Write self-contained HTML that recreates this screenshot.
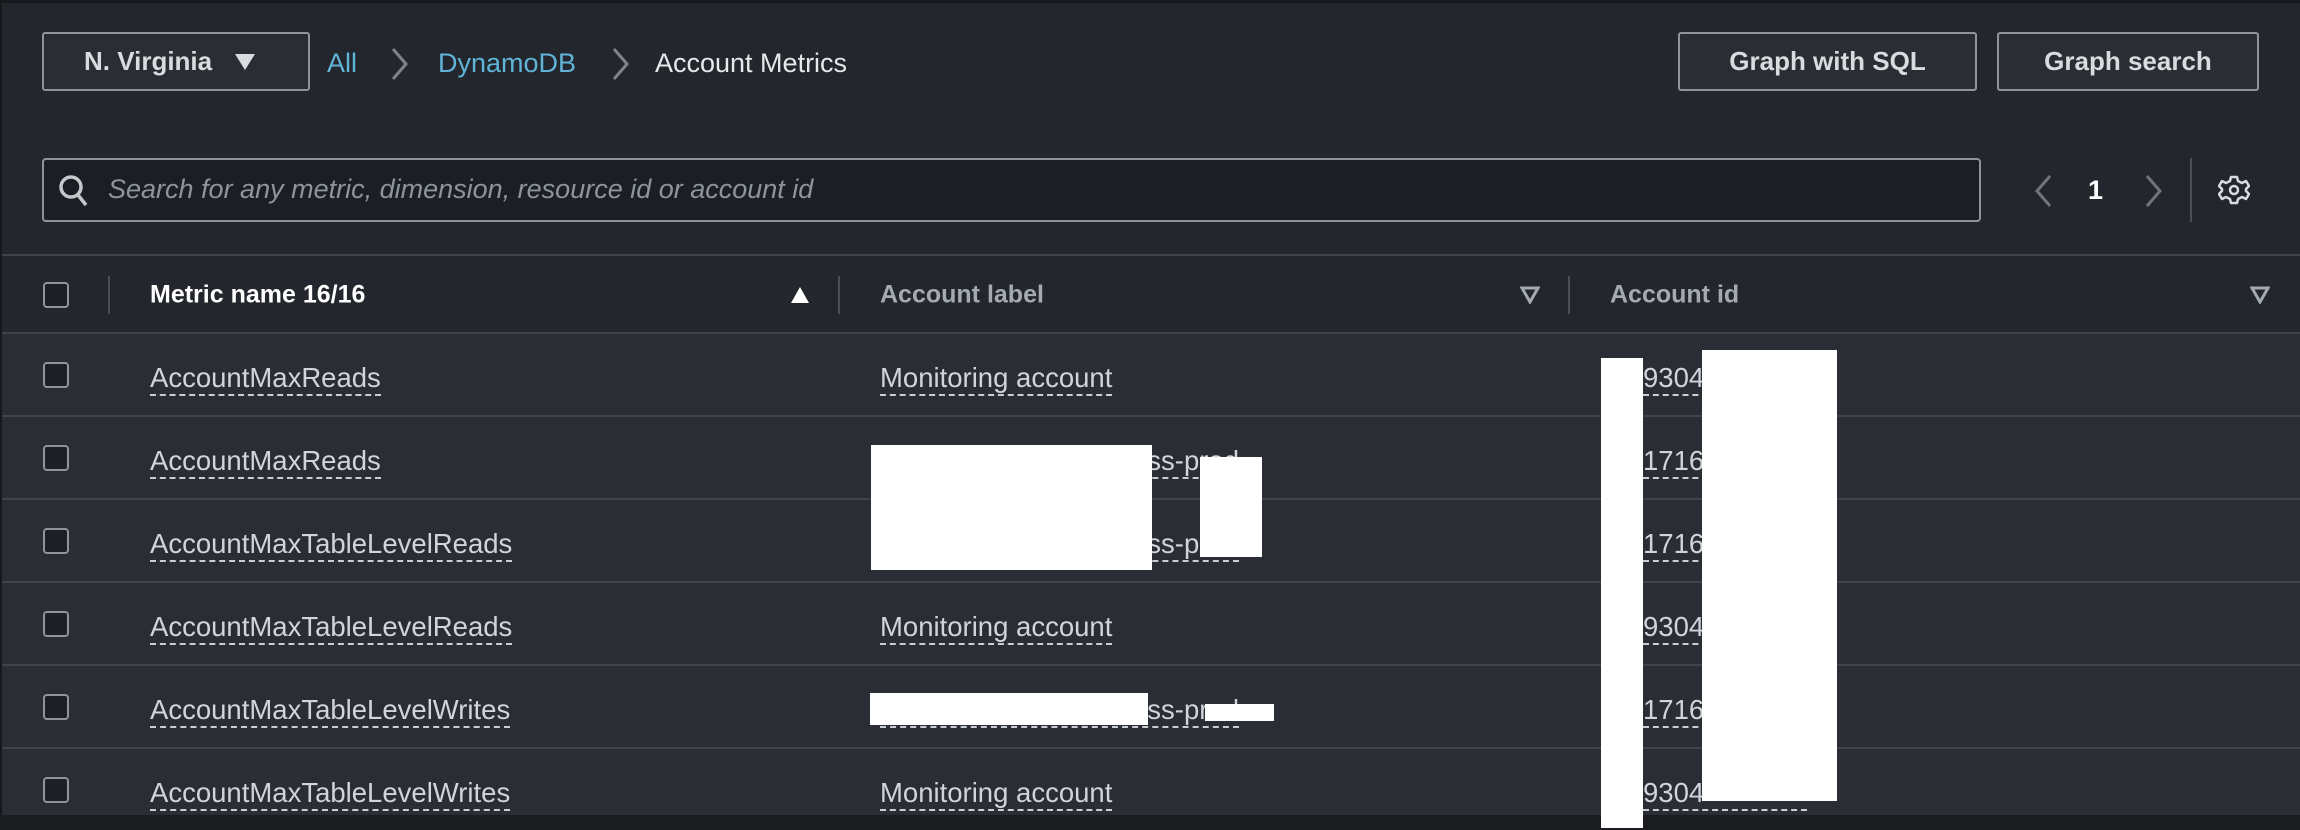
<!DOCTYPE html>
<html><head><meta charset="utf-8"><style>
*{margin:0;padding:0;box-sizing:border-box}
body{width:2300px;height:830px;background:#23262d;font-family:"Liberation Sans",sans-serif;position:relative;overflow:hidden;color:#d1d5db}
.a{position:absolute}
.btn{position:absolute;top:32px;height:59px;border:2px solid #8d9599;border-radius:3px;background:#2a2d33;color:#d8dcde;font-weight:bold;font-size:26px;display:flex;align-items:center;justify-content:center}
.hdr{position:absolute;top:295px;transform:translateY(-50%);font-size:25px;font-weight:bold}
.cb{position:absolute;left:43px;width:26px;height:26px;border:2px solid #8d9599;border-radius:4px;background:#1c1f25}
.row{position:absolute;left:2px;right:0;height:83px;background:#2a2d33;border-top:2px solid #3f444c}
.t{position:absolute;font-size:27.5px;color:#d1d5db;line-height:31px;border-bottom:2px dashed #c9ced1;padding-bottom:1px;white-space:nowrap}
.w{position:absolute;background:#fff}
.sep{position:absolute;width:2px;background:#4a5058}
</style></head><body>
<div class="a" style="left:0;top:0;width:2300px;height:3px;background:#16181c"></div>
<div class="a" style="left:0;top:0;width:2px;height:830px;background:#16181c"></div>

<div class="btn" style="left:42px;width:268px;justify-content:flex-start;padding-left:40px">N. Virginia<svg style="margin-left:22px" width="22" height="18" viewBox="0 0 22 18"><path d="M1 1H21L11 17Z" fill="#d8dcde"/></svg></div>
<div class="a" style="left:327px;top:48px;font-size:27px;color:#5fb4d8">All</div>
<svg class="a" style="left:390px;top:47px" width="20" height="34" viewBox="0 0 20 34"><path d="M3 2L16 17L3 32" stroke="#7d848a" stroke-width="3" fill="none"/></svg>
<div class="a" style="left:438px;top:48px;font-size:27px;color:#5fb4d8">DynamoDB</div>
<svg class="a" style="left:611px;top:47px" width="20" height="34" viewBox="0 0 20 34"><path d="M3 2L16 17L3 32" stroke="#7d848a" stroke-width="3" fill="none"/></svg>
<div class="a" style="left:655px;top:48px;font-size:27px;color:#e6e8ea">Account Metrics</div>

<div class="btn" style="left:1678px;width:299px">Graph with SQL</div>
<div class="btn" style="left:1997px;width:262px">Graph search</div>

<div class="a" style="left:42px;top:158px;width:1939px;height:64px;background:#1b1e24;border:2px solid #8d9599;border-radius:4px"></div>
<svg class="a" style="left:58px;top:174px" width="32" height="34" viewBox="0 0 32 34"><circle cx="13" cy="13" r="10" stroke="#c4c9cc" stroke-width="3.5" fill="none"/><path d="M20 21L28 31" stroke="#c4c9cc" stroke-width="3.5"/></svg>
<div class="a" style="left:108px;top:174px;font-size:27px;font-style:italic;color:#8d9599">Search for any metric, dimension, resource id or account id</div>

<svg class="a" style="left:2032px;top:174px" width="22" height="34" viewBox="0 0 22 34"><path d="M18 2L5 17L18 32" stroke="#6d747a" stroke-width="3" fill="none"/></svg>
<div class="a" style="left:2088px;top:175px;font-size:27px;font-weight:bold;color:#fff">1</div>
<svg class="a" style="left:2143px;top:174px" width="22" height="34" viewBox="0 0 22 34"><path d="M4 2L17 17L4 32" stroke="#6d747a" stroke-width="3" fill="none"/></svg>
<div class="sep" style="left:2190px;top:158px;height:64px"></div>
<svg class="a" style="left:2218px;top:174px" width="32" height="32" viewBox="0 0 32 32"><path d="M13 3H19L20 7L24 9L28 7L31 12L28 15V17L31 20L28 25L24 23L20 25L19 29H13L12 25L8 23L4 25L1 20L4 17V15L1 12L4 7L8 9L12 7Z" stroke="#d8dcde" stroke-width="2.5" fill="none" stroke-linejoin="round"/><circle cx="16" cy="16" r="4" stroke="#d8dcde" stroke-width="2.5" fill="none"/></svg>

<div class="a" style="left:2px;top:254px;width:2298px;height:2px;background:#3f444c"></div>
<div class="cb" style="top:282px"></div>
<div class="sep" style="left:108px;top:276px;height:38px"></div>
<div class="hdr" style="left:150px;color:#fff">Metric name 16/16</div>
<svg class="a" style="left:790px;top:286px" width="20" height="18" viewBox="0 0 20 18"><path d="M10 1L19 17H1Z" fill="#fff"/></svg>
<div class="sep" style="left:838px;top:276px;height:38px"></div>
<div class="hdr" style="left:880px;color:#a3abae">Account label</div>
<svg class="a" style="left:1520px;top:286px" width="20" height="18" viewBox="0 0 20 18"><path d="M2 2H18L10 16Z" stroke="#a3abae" stroke-width="3" fill="none"/></svg>
<div class="sep" style="left:1568px;top:276px;height:38px"></div>
<div class="hdr" style="left:1610px;color:#a3abae">Account id</div>
<svg class="a" style="left:2250px;top:286px" width="20" height="18" viewBox="0 0 20 18"><path d="M2 2H18L10 16Z" stroke="#a3abae" stroke-width="3" fill="none"/></svg>

<div class="row" style="top:332px"></div>
<div class="row" style="top:415px"></div>
<div class="row" style="top:498px"></div>
<div class="row" style="top:581px"></div>
<div class="row" style="top:664px"></div>
<div class="row" style="top:747px;height:68px"></div>
<div class="a" style="left:0;top:815px;width:2300px;height:15px;background:#1a1c20"></div>

<div class="cb" style="top:362px"></div>
<div class="cb" style="top:445px"></div>
<div class="cb" style="top:528px"></div>
<div class="cb" style="top:611px"></div>
<div class="cb" style="top:694px"></div>
<div class="cb" style="top:777px"></div>

<div class="t" style="left:150px;top:362px">AccountMaxReads</div>
<div class="t" style="left:150px;top:445px">AccountMaxReads</div>
<div class="t" style="left:150px;top:528px">AccountMaxTableLevelReads</div>
<div class="t" style="left:150px;top:611px">AccountMaxTableLevelReads</div>
<div class="t" style="left:150px;top:694px">AccountMaxTableLevelWrites</div>
<div class="t" style="left:150px;top:777px">AccountMaxTableLevelWrites</div>

<div class="t" style="left:880px;top:362px">Monitoring account</div>
<div class="t" style="left:880px;top:445px;width:359px;text-align:right">ss-prod</div>
<div class="t" style="left:880px;top:528px;width:359px;text-align:right">ss-prod</div>
<div class="t" style="left:880px;top:611px">Monitoring account</div>
<div class="t" style="left:880px;top:694px;width:359px;text-align:right">ss-prod</div>
<div class="t" style="left:880px;top:777px">Monitoring account</div>

<div class="t" style="left:1643px;top:362px;width:164px">9304</div>
<div class="t" style="left:1643px;top:445px;width:164px">1716</div>
<div class="t" style="left:1643px;top:528px;width:164px">1716</div>
<div class="t" style="left:1643px;top:611px;width:164px">9304</div>
<div class="t" style="left:1643px;top:694px;width:164px">1716</div>
<div class="t" style="left:1643px;top:777px;width:164px">9304</div>

<div class="w" style="left:1601px;top:358px;width:42px;height:470px"></div>
<div class="w" style="left:1702px;top:350px;width:135px;height:451px"></div>
<div class="w" style="left:871px;top:445px;width:281px;height:125px"></div>
<div class="w" style="left:1200px;top:457px;width:62px;height:100px"></div>
<div class="w" style="left:870px;top:693px;width:278px;height:32px"></div>
<div class="w" style="left:1205px;top:704px;width:69px;height:17px"></div>
</body></html>
